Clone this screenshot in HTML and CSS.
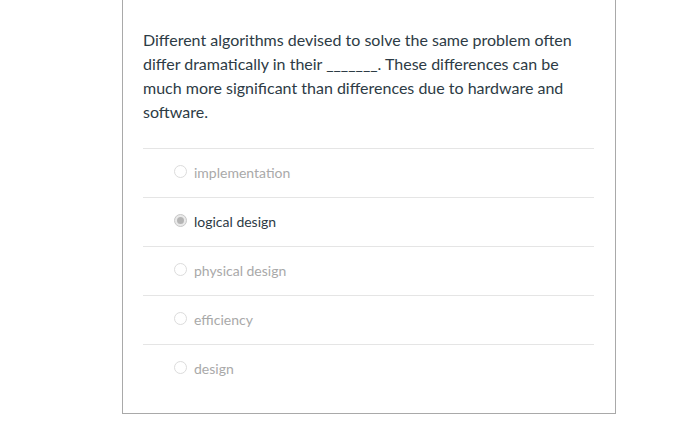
FILE: index.html
```html
<!DOCTYPE html>
<html lang="en">
<head>
    <meta charset="UTF-8">
    <meta name="viewport" content="width=device-width, initial-scale=1.0">
    <title>Frage</title>
    <link rel="stylesheet" href="styles.css">
</head>
<body>

<!-- Fragekarte -->
<div class="question-card">
    <p class="question-text">Different algorithms devised to solve the same problem often differ dramatically in their _______. These differences can be much more significant than differences due to hardware and software.</p>

    <div class="answers">
        <div class="answer">
            <span class="radio"></span>
            <span class="answer-label">implementation</span>
        </div>
        <div class="answer selected">
            <span class="radio"></span>
            <span class="answer-label">logical design</span>
        </div>
        <div class="answer">
            <span class="radio"></span>
            <span class="answer-label">physical design</span>
        </div>
        <div class="answer">
            <span class="radio"></span>
            <span class="answer-label">efficiency</span>
        </div>
        <div class="answer">
            <span class="radio"></span>
            <span class="answer-label">design</span>
        </div>
    </div>
</div>

</body>
</html>
```

FILE: styles.css
```css
body {
    font-family: Lato, "Open Sans", sans-serif;
    margin: 0;
    background-color: #ffffff;
}

.question-card {
    width: 452px;
    margin-left: 122px;
    border: 1px solid #a9a9a9;
    border-top: none; /* Oberkante liegt ausserhalb des Bildes */
    padding: 28px 20px 20px 20px;
}

.question-text {
    margin: 0 0 24px 0;
    font-size: 16px;
    line-height: 24px;
    color: #2d3b45;
}

.answer {
    display: flex;
    align-items: center;
    height: 46px;
    padding-bottom: 2px;
    border-top: 1px solid #e5e5e5;
    padding-left: 31px;
    margin-right: 1px;
}

.radio {
    width: 11px;
    height: 11px;
    border: 1px solid #dcdcdc;
    border-radius: 50%;
    background-color: #ffffff;
    margin-right: 7px;
    margin-top: -1px;
    position: relative;
}

.answer.selected .radio {
    background-color: #e9e9e9;
    border-color: #c8c8c8;
}

.answer.selected .radio::after {
    content: "";
    position: absolute;
    left: 2px;
    top: 2px;
    width: 7px;
    height: 7px;
    border-radius: 50%;
    background-color: #b5b5b5;
}

.answer-label {
    font-size: 14px;
    color: #a9a9a9;
}

.answer.selected .answer-label {
    color: #2d3b45;
}
```
